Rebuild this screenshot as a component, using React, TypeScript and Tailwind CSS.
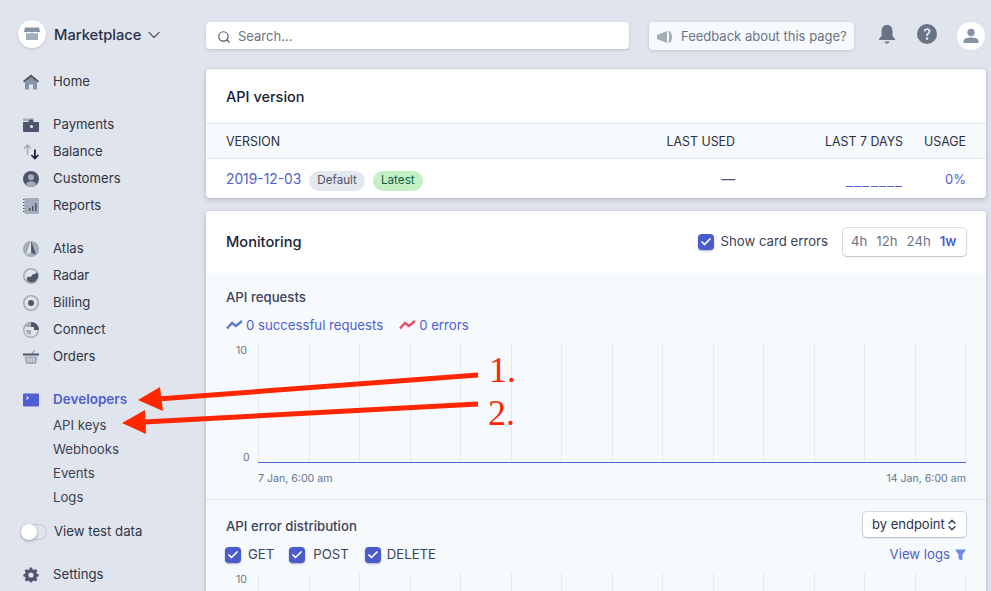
import { ChevronDown, ChevronsUpDown, Search, Check } from "lucide-react";
import type { ReactNode } from "react";

const dark = "#4f566b";
const light = "#a3acb9";

function Icon({ children }: { children: ReactNode }) {
  return (
    <svg width="16" height="16" viewBox="0 0 16 16" className="shrink-0">
      {children}
    </svg>
  );
}

const icons: Record<string, ReactNode> = {
  Home: (
    <Icon>
      <path d="M2 8 L8 3 L14 8 V15.5 H10 V10.5 H6 V15.5 H2 Z" fill="#8792a2" />
      <path d="M8 0.5 L16 7 L14.8 8.4 L8 3.2 L1.2 8.4 L0 7 Z" fill={dark} />
    </Icon>
  ),
  Payments: (
    <Icon>
      <path d="M0 2.5 A1 1 0 0 1 1 1.5 H11 V4 H0 Z" fill={light} />
      <path d="M0 5 H5.5 A2.5 2.5 0 0 1 10.5 5 H16 V14 A1 1 0 0 1 15 15 H1 A1 1 0 0 1 0 14 Z" fill={dark} />
      <circle cx="8.5" cy="9.5" r="1.6" fill="#e0e4ec" />
    </Icon>
  ),
  Balance: (
    <Icon>
      <path d="M4.5 0 L8.5 4 L7.4 5 L5.3 2.9 V11 H3.7 V2.9 L1.6 5 L0.5 4 Z" fill={light} />
      <path d="M11 5.5 H12.8 V12.6 L14.9 10.5 L16 11.6 L11.9 15.7 L7.8 11.6 L8.9 10.5 L11 12.6 Z" fill="#1a1f36" />
    </Icon>
  ),
  Customers: (
    <Icon>
      <circle cx="8" cy="8" r="8" fill={dark} />
      <circle cx="8" cy="6.2" r="3" fill={light} />
      <path d="M2.6 13.9 C3.6 11 5.6 10.2 8 10.2 C10.4 10.2 12.4 11 13.4 13.9 A8 8 0 0 1 8 16 A8 8 0 0 1 2.6 13.9 Z" fill={light} />
    </Icon>
  ),
  Reports: (
    <Icon>
      <rect x="1.5" y="0" width="14.5" height="16" rx="1.5" fill={light} />
      <path d="M0 1.5 H1.5 M0 4.5 H1.5 M0 7.5 H1.5 M0 10.5 H1.5 M0 13.5 H1.5" stroke={dark} strokeWidth="1.2" />
      <path d="M6 10 H7.5 V13 H6 Z M9 8 H10.5 V13 H9 Z M12 5 H13.5 V13 H12 Z" fill={dark} />
    </Icon>
  ),
  Atlas: (
    <Icon>
      <circle cx="8" cy="8" r="8" fill={light} />
      <path d="M8.2 0 L13 13.4 L8.2 11.8 Z" fill={dark} />
      <path d="M8 0 L3 13.4 L8 11.8 Z" fill="#e0e4ec" />
    </Icon>
  ),
  Radar: (
    <Icon>
      <circle cx="8" cy="8" r="7.2" fill="none" stroke={light} strokeWidth="1.6" />
      <path d="M14 4.5 A6.5 6.5 0 0 1 4.5 13 A3.5 3.5 0 0 1 5 8.5 C7 9.5 9 8.5 9.5 6.5 C11 6.5 12.5 5.5 14 4.5 Z" fill={dark} />
    </Icon>
  ),
  Billing: (
    <Icon>
      <circle cx="8" cy="8" r="7.2" fill="none" stroke={light} strokeWidth="1.6" />
      <circle cx="8" cy="8" r="5" fill="#e0e4ec" />
      <circle cx="8" cy="8" r="3" fill={dark} />
    </Icon>
  ),
  Connect: (
    <Icon>
      <circle cx="8" cy="8" r="7.3" fill="#e0e4ec" stroke={light} strokeWidth="1.4" />
      <path d="M8 0 A8 8 0 0 1 16 8 L11 8 L11 5 L8 5 Z" fill={dark} />
      <path d="M8 0 A8 8 0 0 0 0.6 5 H8 Z" fill={light} />
      <path d="M3 8 H8 V13 A5 5 0 0 1 3 8 Z" fill={light} />
      <path d="M8 5 H11 V8 H8 Z" fill="#e0e4ec" />
    </Icon>
  ),
  Orders: (
    <Icon>
      <path d="M9 5 L11.5 1.5" stroke={light} strokeWidth="1.6" />
      <path d="M0 4.5 H16 V6.5 H0 Z" fill={dark} />
      <path d="M1.5 7.5 H14.5 L13.2 14.5 A1 1 0 0 1 12.2 15 H3.8 A1 1 0 0 1 2.8 14.5 Z" fill={light} />
      <path d="M5.3 9 V13 M8 9 V13 M10.7 9 V13" stroke="#e0e4ec" strokeWidth="1.1" />
    </Icon>
  ),
  Developers: (
    <Icon>
      <rect x="0" y="1.5" width="16" height="13" rx="1" fill="#4f5fd0" />
      <path d="M3 4.4 L5.6 5.9 L3 7.4" fill="none" stroke="#fff" strokeWidth="0.9" />
    </Icon>
  ),
  Settings: (
    <Icon>
      <path
        d="M6.7 0.5 H9.3 L9.7 2.6 L11.2 3.2 L13 2 L14.8 3.9 L13.6 5.6 L14.2 7 L16 7.5 V9.9 L14.2 10.3 L13.6 11.7 L14.7 13.4 L12.9 15.2 L11.1 14.1 L9.7 14.7 L9.3 16 H6.7 L6.3 14.7 L4.9 14.1 L3.1 15.2 L1.3 13.4 L2.4 11.7 L1.8 10.3 L0 9.9 V7.5 L1.8 7 L2.4 5.6 L1.2 3.9 L3 2 L4.8 3.2 L6.3 2.6 Z"
        fill={dark}
        transform="translate(0.4 0) scale(0.95)"
      />
      <circle cx="8" cy="8" r="2.6" fill="#e0e4ec" />
    </Icon>
  ),
};

function NavRow({ label, active }: { label: string; active?: boolean }) {
  return (
    <div className="flex h-[27px] items-center gap-3.5 pl-[23px]">
      {icons[label]}
      <span className={active ? "text-[13.5px] font-semibold text-[#4f5fd0]" : "text-[#2f3547]"}>{label}</span>
    </div>
  );
}

function Sidebar() {
  return (
    <aside className="flex w-[206px] shrink-0 flex-col pt-5 text-[13.2px]">
      <div className="flex h-7 items-center pl-[18px]">
        <div className="flex h-7 w-7 items-center justify-center rounded-full bg-white shadow-[0_1px_3px_rgba(60,66,87,0.2)]">
          <svg width="16" height="16" viewBox="0 0 16 16">
            <path d="M1 1.5 H15 L16 6 H0 Z" fill="#8792a2" />
            <path d="M2 6.5 C3 8 6 8 8 6.5 C10 8 13 8 14 6.5 V14 H2 Z" fill="#a3acb9" />
          </svg>
        </div>
        <span className="mt-0.5 ml-2 text-[14.7px] leading-none font-medium text-[#2a2f45]">Marketplace</span>
        <ChevronDown className="mt-0.5 ml-[3px] h-5 w-5 text-[#4f566b]" strokeWidth={1.3} />
      </div>

      <div className="mt-[20px]">
        <NavRow label="Home" />
      </div>
      <div className="mt-[16px]">
        {["Payments", "Balance", "Customers", "Reports"].map((l) => (
          <NavRow key={l} label={l} />
        ))}
      </div>
      <div className="mt-[16px]">
        {["Atlas", "Radar", "Billing", "Connect", "Orders"].map((l) => (
          <NavRow key={l} label={l} />
        ))}
      </div>
      <div className="mt-[16px]">
        <NavRow label="Developers" active />
      </div>
      <div className="mt-px pl-[53px] text-[#3c4257]">
        {["API keys", "Webhooks", "Events", "Logs"].map((l) => (
          <div key={l} className="flex h-6 items-center">
            {l}
          </div>
        ))}
      </div>

      {/* test data toggle */}
      <div className="mt-[12px] flex h-[20px] items-center pl-[21px]">
        <div className="h-4 w-[26px] rounded-full bg-[#e0e4ec] shadow-[inset_0_0_0_1px_rgba(60,66,87,0.16)]">
          <div className="h-4 w-4 rounded-full bg-white shadow-[0_1px_3px_rgba(60,66,87,0.45)]" />
        </div>
        <span className="ml-[7px] text-[#2f3547]">View test data</span>
      </div>

      <div className="mt-[19px]">
        <NavRow label="Settings" />
      </div>
    </aside>
  );
}

function TopBar() {
  return (
    <div className="flex h-[69px] items-start pt-[22px] text-[13px]">
      <div className="flex h-[27px] w-[423px] items-center gap-[7px] rounded bg-white pt-0.5 pl-[11px] shadow-[0_1px_3px_rgba(60,66,87,0.2)]">
        <Search className="h-[14px] w-[14px] text-[#4f566b]" strokeWidth={2} />
        <span className="text-[#697386]">Search...</span>
      </div>
      <div className="ml-5 flex h-7 w-[205px] items-center rounded bg-[#f7fafc] pt-px pl-2 shadow-[0_1px_3px_rgba(60,66,87,0.2)]">
        <svg width="16" height="14" viewBox="0 0 16 14">
          <path d="M0 5 L10 1 V13 L0 9 Z" fill="#a3acb9" />
          <path d="M11 1 C14 1 15 4 15 7 C15 10 14 13 11 13 C12.5 11 12.5 3 11 1 Z" fill="#a3acb9" />
        </svg>
        <span className="ml-2 whitespace-nowrap text-[#697386]">Feedback about this page?</span>
      </div>
      <svg width="18" height="20" viewBox="0 0 18 20" className="mt-[2px] ml-[24px]">
        <path d="M9 1 C12.5 1 14.5 3.5 14.5 7 V12 L17 15 V16 H1 V15 L3.5 12 V7 C3.5 3.5 5.5 1 9 1 Z" fill="#697386" />
        <path d="M6.5 17.5 H11.5 C11 19 10 19.5 9 19.5 C8 19.5 7 19 6.5 17.5 Z" fill="#697386" />
      </svg>
      <svg width="20" height="20" viewBox="0 0 20 20" className="mt-[2px] ml-[21px]">
        <circle cx="10" cy="10" r="10" fill="#697386" />
        <path d="M6.6 7.6 C6.7 5.5 8.2 4.3 10.1 4.3 C12.1 4.3 13.5 5.6 13.5 7.3 C13.5 9.9 10.9 9.8 10.9 12 H9 C9 9 11.4 8.9 11.4 7.4 C11.4 6.6 10.9 6.1 10 6.1 C9.1 6.1 8.7 6.7 8.6 7.6 Z" fill="#e0e4ec" />
        <circle cx="10" cy="14.6" r="1.3" fill="#e0e4ec" />
      </svg>
      <div className="ml-[20px] flex h-7 w-7 items-center justify-center rounded-full bg-white">
        <svg width="16" height="16" viewBox="0 0 16 16">
          <circle cx="8" cy="4.5" r="3.7" fill="#8792a2" />
          <path d="M0.5 15 V13 C0.5 10.5 4 9.5 8 9.5 C12 9.5 15.5 10.5 15.5 13 V15 Z" fill="#8792a2" />
        </svg>
      </div>
    </div>
  );
}

function ApiVersionCard() {
  return (
    <section className="overflow-hidden rounded bg-white shadow-[0_0_0_1px_rgba(60,66,87,0.05),0_2px_5px_rgba(60,66,87,0.25)]">
      <div className="flex h-[54px] items-center pt-0.5 pl-5 text-[14.5px] font-medium text-[#1a1f36]">API version</div>
      <div className="flex h-[36px] items-center border-y border-[#e3e8ee] bg-[#f7fafc] pt-0.5 pr-5 pl-5 text-[12.4px] text-[#2a2f45]">
        <span>VERSION</span>
        <span className="ml-auto">LAST USED</span>
        <span className="ml-[90px]">LAST 7 DAYS</span>
        <span className="ml-[21px]">USAGE</span>
      </div>
      <div className="flex h-[39px] items-center pt-0.5 pr-5 pl-5 text-[13.8px]">
        <span className="text-[#4f5fd0]">2019-12-03</span>
        <span className="mt-[2px] ml-2 flex h-5 items-center rounded-full bg-[#e3e8ee] px-2 text-[11.7px] text-[#4f566b]">Default</span>
        <span className="mt-[2px] ml-2 flex h-5 items-center rounded-full bg-[#c4f0c4] px-2 text-[11.7px] text-[#0e6245]">Latest</span>
        <span className="ml-auto text-[#4f566b]">—</span>
        <div className="mt-[14px] ml-[111px] flex w-[56px] justify-between">
          {[0, 1, 2, 3, 4, 5, 6].map((i) => (
            <span key={i} className="h-px w-[7px] bg-[#4f5fd0]" />
          ))}
        </div>
        <span className="ml-[43px] text-[13px] text-[#4f5fd0]">0%</span>
      </div>
    </section>
  );
}

function Checkbox() {
  return (
    <span className="flex h-4 w-4 items-center justify-center rounded-[4px] bg-[#4a5bcc] shadow-[0_1px_2px_rgba(60,66,87,0.4)]">
      <Check className="h-3 w-3 text-white" strokeWidth={3.5} />
    </span>
  );
}

function ChartGrid({ height }: { height: number }) {
  return (
    <div className="flex" style={{ height }}>
      {Array.from({ length: 14 }, (_, i) => (
        <div key={i} className="flex-1 border-l border-[#e6eaef] last:border-r" />
      ))}
    </div>
  );
}

function MonitoringCard() {
  return (
    <section className="mt-[13px] rounded bg-[#f7fafc] shadow-[0_0_0_1px_rgba(60,66,87,0.05),0_2px_5px_rgba(60,66,87,0.25)]">
      <div className="flex h-[62px] items-center rounded-t bg-white pr-5 pl-5">
        <span className="mt-0.5 text-[14.6px] font-medium text-[#1a1f36]">Monitoring</span>
        <div className="ml-auto flex items-center gap-[7px] text-[13.2px] text-[#3c4257]">
          <Checkbox />
          <span>Show card errors</span>
        </div>
        <div className="ml-[15px] flex h-7 w-[123px] items-center gap-[9px] rounded bg-white pl-2 text-[13.2px] text-[#697386] shadow-[0_0_0_1px_rgba(60,66,87,0.16),0_1px_2px_rgba(60,66,87,0.2)]">
          <span>4h</span>
          <span>12h</span>
          <span>24h</span>
          <span className="font-semibold text-[#4f5fd0]">1w</span>
        </div>
      </div>

      <div className="border-b border-[#e3e8ee] pt-[14px] pr-5 pl-5">
        <div className="text-[13.2px] leading-5 font-medium text-[#3c4257]">API requests</div>
        <div className="mt-2 flex items-center text-[13.2px] leading-5 text-[#4f5fd0]">
          <svg width="17" height="10" viewBox="0 0 17 10" fill="none" stroke="#5f7ad8" strokeWidth="2.5">
            <path d="M1 8.5 L6 3 L10 6 L16 1" />
          </svg>
          <span className="ml-[3px]">0 successful requests</span>
          <svg width="17" height="10" viewBox="0 0 17 10" fill="none" stroke="#e5506e" strokeWidth="2.5" className="ml-4">
            <path d="M1 8.5 L6 3 L10 6 L16 1" />
          </svg>
          <span className="ml-[3px]">0 errors</span>
        </div>
        <div className="relative mt-[9px] ml-8">
          <span className="absolute top-0 -left-[22px] text-[10.6px] leading-[13px] text-[#697386]">10</span>
          <span className="absolute -bottom-px -left-[15px] text-[10.6px] leading-[13px] text-[#697386]">0</span>
          <ChartGrid height={118} />
          <div className="h-px bg-[#4f5fd0]" />
        </div>
        <div className="ml-8 flex h-[36px] items-start justify-between pt-[9px] text-[10.6px] leading-[13px] text-[#697386]">
          <span>7 Jan, 6:00 am</span>
          <span>14 Jan, 6:00 am</span>
        </div>
      </div>

      <div className="pr-5 pl-5">
        <div className="flex items-start justify-between pt-3">
          <span className="pt-[4px] text-[13.2px] leading-5 font-medium text-[#3c4257]">API error distribution</span>
          <div className="flex h-[25px] w-[103px] items-center justify-between rounded bg-white pr-[7px] pl-[9px] text-[13px] whitespace-nowrap text-[#2a2f45] shadow-[0_0_0_1px_rgba(60,66,87,0.16),0_1px_2px_rgba(60,66,87,0.25)]">
            by endpoint
            <ChevronsUpDown className="h-[14px] w-[14px] text-[#3c4257]" strokeWidth={2.5} />
          </div>
        </div>
        <div className="mt-[8px] -ml-px flex h-5 items-center text-[13.2px] text-[#3c4257]">
          <Checkbox />
          <span className="ml-[7px]">GET</span>
          <span className="ml-[15px]"><Checkbox /></span>
          <span className="ml-2">POST</span>
          <span className="ml-4"><Checkbox /></span>
          <span className="ml-[6px]">DELETE</span>
          <span className="ml-auto text-[#4f5fd0]">View logs</span>
          <svg width="11" height="12" viewBox="0 0 11 12" className="ml-[5px]">
            <path d="M0 0.5 H11 L7.4 5.5 V11.5 L3.6 10 V5.5 Z" fill="#6c8ae4" />
          </svg>
        </div>
        <div className="relative mt-[8px] ml-8">
          <span className="absolute top-0 -left-[22px] text-[10.6px] leading-[13px] text-[#697386]">10</span>
          <ChartGrid height={40} />
        </div>
      </div>
    </section>
  );
}

export default function App() {
  return (
    <div className="relative flex h-[591px] w-[991px] overflow-hidden bg-[#e0e4ec] font-['Inter',sans-serif]">
      <Sidebar />
      <main className="w-[780px] shrink-0">
        <TopBar />
        <ApiVersionCard />
        <MonitoringCard />
      </main>

      {/* red annotation arrows laid over the page */}
      <svg className="absolute top-0 left-0" width="991" height="591" viewBox="0 0 991 591">
        <path d="M478 375 L158 399" stroke="#ff2600" strokeWidth="5" />
        <path d="M138 400 L160 387 L163 411 Z" fill="#ff2600" />
        <path d="M478 404 L144 422" stroke="#ff2600" strokeWidth="5" />
        <path d="M122 423 L145 410 L146 434 Z" fill="#ff2600" />
      </svg>
      <span className="absolute top-[350px] left-[489px] font-['Liberation_Serif',serif] text-[36px] leading-10 text-[#ff2600]">1.</span>
      <span className="absolute top-[393px] left-[488px] font-['Liberation_Serif',serif] text-[36px] leading-10 text-[#ff2600]">2.</span>
    </div>
  );
}
